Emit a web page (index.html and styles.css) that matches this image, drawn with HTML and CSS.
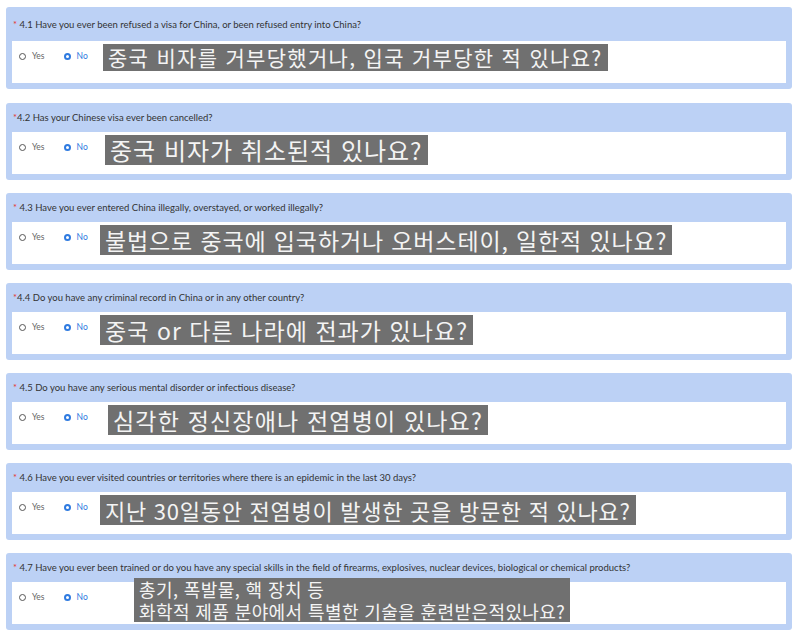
FILE: index.html
```html
<!DOCTYPE html>
<html lang="ko">
<head>
<meta charset="utf-8">
<title>Visa questions</title>
<link rel="stylesheet" href="styles.css">
</head>
<body>
<div class="list">
  <section class="card card-first">
    <div class="q"><span class="req">*</span>&nbsp;4.1 Have you ever been refused a visa for China, or been refused entry into China?</div>
    <div class="ans">
      <div class="opts"><span class="radio"></span><span class="lbl">Yes</span><span class="radio on"></span><span class="lbl on">No</span></div>
      <div class="note n1">중국 비자를 거부당했거나, 입국 거부당한 적 있나요?</div>
    </div>
  </section>
  <section class="card">
    <div class="q"><span class="req">*</span>4.2 Has your Chinese visa ever been cancelled?</div>
    <div class="ans">
      <div class="opts"><span class="radio"></span><span class="lbl">Yes</span><span class="radio on"></span><span class="lbl on">No</span></div>
      <div class="note big n2">중국 비자가 취소된적 있나요?</div>
    </div>
  </section>
  <section class="card">
    <div class="q"><span class="req">*</span>&nbsp;4.3 Have you ever entered China illegally, overstayed, or worked illegally?</div>
    <div class="ans">
      <div class="opts"><span class="radio"></span><span class="lbl">Yes</span><span class="radio on"></span><span class="lbl on">No</span></div>
      <div class="note big n3">불법으로 중국에 입국하거나 오버스테이, 일한적 있나요?</div>
    </div>
  </section>
  <section class="card">
    <div class="q"><span class="req">*</span>4.4 Do you have any criminal record in China or in any other country?</div>
    <div class="ans">
      <div class="opts"><span class="radio"></span><span class="lbl">Yes</span><span class="radio on"></span><span class="lbl on">No</span></div>
      <div class="note big n4">중국 or 다른 나라에 전과가 있나요?</div>
    </div>
  </section>
  <section class="card">
    <div class="q"><span class="req">*</span>&nbsp;4.5 Do you have any serious mental disorder or infectious disease?</div>
    <div class="ans">
      <div class="opts"><span class="radio"></span><span class="lbl">Yes</span><span class="radio on"></span><span class="lbl on">No</span></div>
      <div class="note big n5">심각한 정신장애나 전염병이 있나요?</div>
    </div>
  </section>
  <section class="card">
    <div class="q"><span class="req">*</span>&nbsp;4.6 Have you ever visited countries or territories where there is an epidemic in the last 30 days?</div>
    <div class="ans">
      <div class="opts"><span class="radio"></span><span class="lbl">Yes</span><span class="radio on"></span><span class="lbl on">No</span></div>
      <div class="note big n6">지난 30일동안 전염병이 발생한 곳을 방문한 적 있나요?</div>
    </div>
  </section>
  <section class="card">
    <div class="q"><span class="req">*</span>&nbsp;4.7 Have you ever been trained or do you have any special skills in the field of firearms, explosives, nuclear devices, biological or chemical products?</div>
    <div class="ans">
      <div class="opts"><span class="radio"></span><span class="lbl">Yes</span><span class="radio on"></span><span class="lbl on">No</span></div>
      <div class="note two n7"><span class="line">총기, 폭발물, 핵 장치 등</span><span class="line">화학적 제품 분야에서 특별한 기술을 훈련받은적있나요?</span></div>
    </div>
  </section>
</div>
</body>
</html>
```

FILE: styles.css
```css
html, body {
  margin: 0;
  padding: 0;
  background: #ffffff;
}

.list {
  display: flex;
  flex-direction: column;
  gap: 13px;
  padding: 7px 8px 0 6px;
}

.card {
  background: #bcd1f5;
  border-radius: 3px;
  padding: 0 6px 6px;
  height: 77px;
  box-sizing: border-box;
  display: flex;
  flex-direction: column;
}

.card-first {
  height: 82px;
  margin-bottom: 1px;
}

.q {
  flex: 1;
  display: flex;
  align-items: center;
  padding-left: 1px;
  font-family: "Lato", "Liberation Sans", sans-serif;
  font-size: 9.5px;
  color: #333333;
  white-space: nowrap;
}

.req {
  color: #e53935;
}

.ans {
  background: #ffffff;
  height: 42px;
  flex: none;
  display: flex;
  align-items: flex-start;
  padding-top: 3px;
  box-sizing: border-box;
}

.opts {
  display: flex;
  align-items: center;
  height: 27px;
  width: 88px;
  box-sizing: border-box;
  flex: none;
  padding-left: 7px;
  font-family: "Lato", "Liberation Sans", sans-serif;
  font-size: 8.5px;
  color: #666666;
}

.radio {
  width: 7px;
  height: 7px;
  border: 1px solid #555555;
  border-radius: 50%;
  box-sizing: border-box;
  flex: none;
  margin-right: 6px;
  margin-top: -2px;
}

.radio.on {
  border: 2px solid #2f7be0;
  background: #ffffff;
  margin-left: 19px;
}

.lbl {
  margin-top: -3px;
}

.lbl.on {
  color: #2f7be0;
}

.note {
  background: #707070;
  color: #f4f4f4;
  font-family: "Noto Sans CJK KR", "Noto Sans", sans-serif;
  font-size: 21px;
  line-height: 27px;
  padding: 0 5px;
  white-space: nowrap;
  letter-spacing: 1.3px;
}

.note.big {
  font-size: 23px;
  line-height: 30px;
  letter-spacing: 1px;
}

.note.two {
  display: flex;
  flex-direction: column;
  font-size: 18px;
  line-height: 22px;
  letter-spacing: 0.4px;
  margin-top: -7px;
}

.line {
  display: block;
}

.note.n1 { margin-left: 3px; }
.note.n2 { margin-left: 5px; font-size: 24px; letter-spacing: 1px; }
.note.n3 { margin-left: 0; letter-spacing: 0.87px; }
.note.n4 { margin-left: 0; letter-spacing: 1.05px; }
.note.n5 { margin-left: 8px; letter-spacing: 1.18px; }
.note.n6 { margin-left: 0; font-size: 22px; letter-spacing: 0.73px; }
.note.n7 { margin-left: 34px; }
```
